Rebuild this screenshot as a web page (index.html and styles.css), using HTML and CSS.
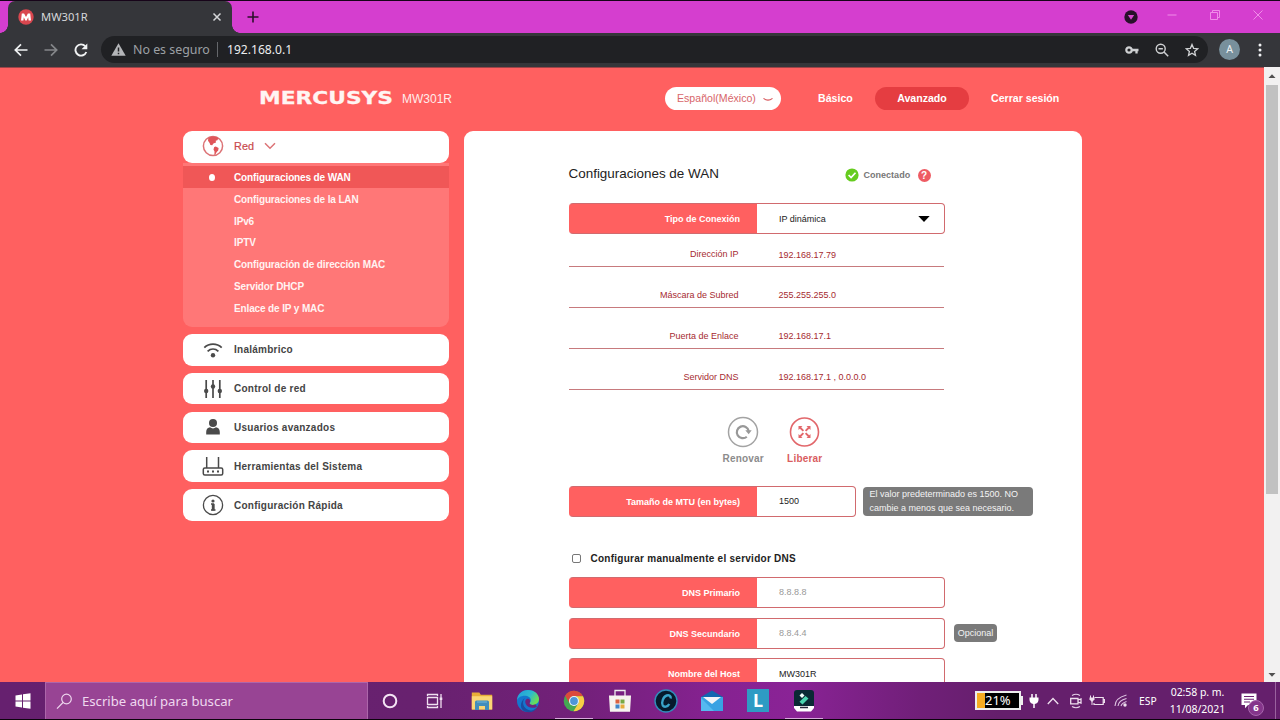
FILE: index.html
```html
<!DOCTYPE html>
<html lang="es">
<head>
<meta charset="utf-8">
<title>MW301R</title>
<link rel="stylesheet" href="styles.css">
</head>
<body>
<div class="screen">
  <header class="tabstrip">
    <div class="tab">
      <svg class="favicon" width="16" height="16" viewBox="0 0 16 16"><circle cx="8" cy="8" r="7.700" fill="#d9474f"/><path d="M3 11.500l.8-7h2.300L8 8l1.900-3.500h2.300l.8 7h-2.400L10.200 8.300 8.700 11.500H7.300L5.800 8.300l-.4 3.200z" fill="#fff"/></svg>
      <span class="tab-title">MW301R</span>
      <svg width="10" height="10" viewBox="0 0 10 10"><path d="M1.500 1.500l7 7M8.500 1.500l-7 7" stroke="#d5d7d9" stroke-width="1.500"/></svg>
    </div>
    <svg class="newtab" width="12" height="12" viewBox="0 0 12 12"><path d="M6 .5v11M.5 6h11" stroke="#2b0f2a" stroke-width="1.600"/></svg>
    <div class="winctl">
      <svg width="14" height="14" viewBox="0 0 14 14"><circle cx="7" cy="7" r="6.700" fill="#28102a"/><path d="M3.800 5h6.400L7 9.800z" fill="#d848cf"/></svg>
      <svg width="10" height="10" viewBox="0 0 10 10"><path d="M.5 5h9" stroke="#f08de8"/></svg>
      <svg width="10" height="10" viewBox="0 0 10 10"><path d="M.5 2.500h7v7h-7zM2.500 2.500v-2h7v7h-2" fill="none" stroke="#f08de8"/></svg>
      <svg width="10" height="10" viewBox="0 0 10 10"><path d="M.5.500l9 9M9.500.500l-9 9" stroke="#f08de8"/></svg>
    </div>
  </header>

  <div class="toolbar">
    <div class="nav">
      <svg width="14" height="14" viewBox="0 0 14 14"><path d="M13.500 7H1.500M7 1.300L1.300 7 7 12.700" fill="none" stroke="#f1f3f4" stroke-width="1.700"/></svg>
      <svg width="14" height="14" viewBox="0 0 14 14"><path d="M.5 7h12M7 1.300L12.700 7 7 12.700" fill="none" stroke="#85878a" stroke-width="1.700"/></svg>
      <svg width="14" height="14" viewBox="0 0 14 14"><path d="M12.300 9A5.600 5.600 0 1 1 11.200 3.200" fill="none" stroke="#f1f3f4" stroke-width="1.900"/><path d="M13.300.4v5.800H7.500z" fill="#f1f3f4"/></svg>
    </div>
    <div class="omnibox">
      <svg width="15" height="13" viewBox="0 0 15 13"><path d="M7.500.3L14.700 12.700H.3z" fill="#b4b6b9"/><path d="M7.500 4.500v4M7.500 9.700v1.600" stroke="#202124" stroke-width="1.500"/></svg>
      <span class="unsafe">No es seguro</span>
      <span class="divider"></span>
      <span class="url">192.168.0.1</span>
      <div class="omni-icons">
        <svg width="14" height="10" viewBox="0 0 14 10"><circle cx="4" cy="5" r="2.700" fill="none" stroke="#cfd1d3" stroke-width="2.200"/><path d="M7 5h6.500M11.500 5v3.500" stroke="#cfd1d3" stroke-width="2.300"/></svg>
        <svg width="14" height="14" viewBox="0 0 14 14"><circle cx="5.700" cy="5.700" r="4.500" fill="none" stroke="#cfd1d3" stroke-width="1.400"/><path d="M3.500 5.700h4.400M9 9l4.200 4.200" stroke="#cfd1d3" stroke-width="1.500"/></svg>
        <svg width="14" height="14" viewBox="0 0 14 14"><path d="M7 1.500l1.600 3.800 4.100.4-3.100 2.700.9 4L7 10.300l-3.500 2.100.9-4-3.100-2.700 4.100-.4z" fill="none" stroke="#cfd1d3" stroke-width="1.300"/></svg>
      </div>
    </div>
    <div class="avatar">A</div>
    <svg width="4" height="14" viewBox="0 0 4 14"><g fill="#f1f3f4"><circle cx="2" cy="2" r="1.500"/><circle cx="2" cy="7" r="1.500"/><circle cx="2" cy="12" r="1.500"/></g></svg>
  </div>

  <div class="viewport">
    <div class="page">
      <div class="brandbar">
        <svg class="logo" width="137" height="24" viewBox="0 0 137 24"><text x="0" y="18" textLength="134" lengthAdjust="spacingAndGlyphs">MERCUSYS</text></svg>
        <span class="model">MW301R</span>
        <div class="lang">Español(México)<svg width="10" height="5" viewBox="0 0 10 5"><path d="M.5 1.300Q5 5 9.500 1.300" fill="none" stroke="#d8565a" stroke-width="1.100"/></svg></div>
        <span class="basic">Básico</span>
        <span class="advanced">Avanzado</span>
        <span class="logout">Cerrar sesión</span>
      </div>
      <div class="columns">
        <nav class="side">
          <div class="item open">
            <svg width="22" height="22" viewBox="0 0 22 22"><circle cx="11" cy="11" r="9.600" fill="none" stroke="#dc7376" stroke-width="1.500"/><path d="M6.300 3.200L9 1.500l5 .2 2.400 1.500-1 2-1.700.6.300 1.600-2.600 1-1.200 1.800-1.800-.3-.8-1.900-1.600-2.200zM12.200 12l1.600-.6 2.800 1.700-.4 2.400-1.500 1.400-1.300 2.600-1 .5.100-3.600-1-1.800z" fill="#e0565a"/></svg>
            <span>Red</span>
            <svg class="chev" width="12" height="8" viewBox="0 0 12 8"><path d="M1 1.200l5 5 5-5" fill="none" stroke="#dc7376" stroke-width="1.500"/></svg>
          </div>
          <ul class="submenu">
            <li class="current">Configuraciones de WAN</li>
            <li>Configuraciones de la LAN</li>
            <li>IPv6</li>
            <li>IPTV</li>
            <li>Configuración de dirección MAC</li>
            <li>Servidor DHCP</li>
            <li>Enlace de IP y MAC</li>
          </ul>
          <div class="item"><svg width="22" height="22" viewBox="0 0 22 22"><g fill="none" stroke="#4a4a4a" stroke-width="1.800"><path d="M2.300 8.700C7.200 4 14.800 4 19.700 8.700"/><path d="M5.600 12.300c3.200-2.900 7.600-2.900 10.800 0"/></g><circle cx="11" cy="16.300" r="2.200" fill="#4a4a4a"/></svg><span>Inalámbrico</span></div>
          <div class="item"><svg width="22" height="22" viewBox="0 0 22 22"><path d="M4.200 2v18M11 2v18M17.800 2v18" stroke="#4a4a4a" stroke-width="1.700"/><g fill="#4a4a4a"><circle cx="4.200" cy="13" r="2.200"/><circle cx="11" cy="8.500" r="2.200"/><circle cx="17.800" cy="13" r="2.200"/></g></svg><span>Control de red</span></div>
          <div class="item"><svg width="22" height="22" viewBox="0 0 22 22"><g fill="#4a4a4a"><circle cx="11" cy="7" r="4"/><path d="M4.200 18.500v-2.500c0-3 1.800-4.500 3.800-4.700 1.600 1.500 4.400 1.500 6 0 2 .2 3.800 1.700 3.800 4.700v2.500z"/></g></svg><span>Usuarios avanzados</span></div>
          <div class="item"><svg width="22" height="22" viewBox="0 0 22 22"><g fill="none" stroke="#4a4a4a" stroke-width="1.500"><path d="M4.700 2v11M16.500 2v11"/><rect x="1.300" y="13" width="19.400" height="7" rx="1.500"/></g><path d="M5 16.500h2M10 16.500h2M15 16.500h2" stroke="#4a4a4a" stroke-width="2"/></svg><span>Herramientas del Sistema</span></div>
          <div class="item"><svg width="22" height="22" viewBox="0 0 22 22"><circle cx="11" cy="11" r="9.600" fill="none" stroke="#4a4a4a" stroke-width="1.300"/><circle cx="11" cy="7" r="1.600" fill="#4a4a4a"/><path d="M9 10h2.500v5.500M9 16h4.500" fill="none" stroke="#4a4a4a" stroke-width="1.300"/><path d="M11.200 10v6.500" stroke="#4a4a4a" stroke-width="2.800"/></svg><span>Configuración Rápida</span></div>
        </nav>
        <main class="panel">
          <div class="heading">
            <h1>Configuraciones de WAN</h1>
            <div class="status">
              <svg width="14" height="14" viewBox="0 0 14 14"><circle cx="7" cy="7" r="6.600" fill="#66cc1f"/><path d="M3.600 7l2.500 2.600 4.400-4.800" fill="none" stroke="#fff" stroke-width="1.700"/></svg>
              <span>Conectado</span>
              <i class="help">?</i>
            </div>
          </div>
          <div class="field first"><label>Tipo de Conexión</label><div class="value">IP dinámica<svg width="12" height="6" viewBox="0 0 12 6"><path d="M.3 0h11.400L6 6z" fill="#000"/></svg></div></div>
          <dl class="info">
            <div><dt>Dirección IP</dt><dd>192.168.17.79</dd></div>
            <div><dt>Máscara de Subred</dt><dd>255.255.255.0</dd></div>
            <div><dt>Puerta de Enlace</dt><dd>192.168.17.1</dd></div>
            <div><dt>Servidor DNS</dt><dd>192.168.17.1 , 0.0.0.0</dd></div>
          </dl>
          <div class="actions">
            <div class="action renew"><svg width="32" height="32" viewBox="0 0 32 32"><circle cx="16" cy="16" r="14.500" fill="none" stroke="#a3a3a3" stroke-width="1.500"/><path d="M19.800 20.700A6 6 0 1 1 21.700 15" fill="none" stroke="#989898" stroke-width="2.200"/><path d="M18.300 14.300h6.400l-3 4z" fill="#989898"/></svg><span>Renovar</span></div>
            <div class="action release"><svg width="32" height="32" viewBox="0 0 32 32"><circle cx="15.500" cy="16" r="14" fill="none" stroke="#e2676b" stroke-width="1.600"/><g transform="translate(-.5 0)"><path d="M11.500 11.500l3.400 3.400M20.500 11.500l-3.400 3.400M11.500 20.500l3.400-3.400M20.500 20.500l-3.400-3.400" stroke="#e2676b" stroke-width="1.900"/><path d="M10 10h4l-4 4zM22 10h-4l4 4zM10 22h4l-4-4zM22 22h-4l4-4z" fill="#e2676b"/></g></svg><span>Liberar</span></div>
          </div>
          <div class="line mtu"><div class="field short"><label>Tamaño de MTU (en bytes)</label><div class="value">1500</div></div><div class="tip">El valor predeterminado es 1500. NO<br>cambie a menos que sea necesario.</div></div>
          <div class="check"><span class="box"></span><span>Configurar manualmente el servidor DNS</span></div>
          <div class="line"><div class="field"><label>DNS Primario</label><div class="value ghost">8.8.8.8</div></div></div>
          <div class="line"><div class="field"><label>DNS Secundario</label><div class="value ghost">8.8.4.4</div></div><div class="tag">Opcional</div></div>
          <div class="line"><div class="field"><label>Nombre del Host</label><div class="value">MW301R</div></div></div>
        </main>
      </div>
    </div>
    <div class="scrollbar">
      <svg width="8" height="4" viewBox="0 0 8 4"><path d="M.5 4L4 .3 7.500 4z" fill="#505050"/></svg>
      <div class="thumb"></div>
      <svg class="down" width="8" height="4" viewBox="0 0 8 4"><path d="M.5 0L4 3.700 7.500 0z" fill="#505050"/></svg>
    </div>
  </div>

  <footer class="taskbar">
    <div class="start"><svg width="16" height="16" viewBox="0 0 16 16"><path d="M.5 2.400L7 1.500v6H.5zM8 1.300L15.500.3v7.200H8zM.5 8.500H7v6l-6.500-.9zM8 8.500h7.500v7.200L8 14.700z" fill="#fff"/></svg></div>
    <div class="search"><svg width="17" height="17" viewBox="0 0 17 17"><circle cx="10.500" cy="6" r="4.800" fill="none" stroke="#eed6ee" stroke-width="1.200"/><path d="M7 9.500L1 15.700" stroke="#eed6ee" stroke-width="1.200"/></svg><span>Escribe aquí para buscar</span></div>
    <div class="apps">
      <div class="app"><svg width="16" height="16" viewBox="0 0 16 16"><circle cx="8" cy="8" r="6.300" fill="none" stroke="#f4e4f4" stroke-width="2"/></svg></div>
      <div class="app"><svg width="18" height="16" viewBox="0 0 18 16"><path d="M1.500 3V1.500h10V3M1.500 13v1.500h10V13M1.500 4.500h10v7h-10zM15 1v14" fill="none" stroke="#f0dff0" stroke-width="1.300"/><path d="M13.700 4.500h2.600v2.500h-2.600z" fill="#f0dff0"/></svg></div>
      <div class="app"><svg width="22" height="20" viewBox="0 0 22 20"><path d="M.8 1.500h7.500l1.500 2.200h11.400v14.800H.8z" fill="#e8ad38"/><path d="M.8 5.200h20.400v13.300H.8z" fill="#fbd675"/><path d="M4 19v-8q0-1.500 1.500-1.500h11q1.500 0 1.500 1.500v8h-4v-4H8v4z" fill="#438dbb"/><path d="M6 11h10" stroke="#72b8d9"/></svg></div>
      <div class="app"><svg width="24" height="24" viewBox="0 0 24 24"><defs><linearGradient id="edge" x1="0" y1="0" x2="1" y2=".5"><stop stop-color="#249bdc"/><stop offset=".6" stop-color="#2cb9cf"/><stop offset="1" stop-color="#6bdd57"/></linearGradient></defs><circle cx="12" cy="12" r="11" fill="#1476ce"/><path d="M1 12C1 5 6 1 12 1c7 0 11 4.500 11 9 0 4-3.500 6-7 6-1.800 0-3-.7-2.500-1.700.7-1 1.300-1.600 1.300-3 0-2.800-2.800-4.500-6-4.500C4.500 6.800 1.500 9 1 12z" fill="url(#edge)"/><path d="M9 9c-3 3-2.500 8 1.500 11 3 2 7 2 10-1-2 4-7 5-11 3.800-6-2-6-10-.5-13.800z" fill="#194da1"/><path d="M13.500 14.300c.8-1.200.9-3.500-.5-4.300-3-1-4.500 2-3.300 4.700 1.500 3.500 6.500 5.600 11.300 3l-1.500-2.500c-2 1-5 1.200-6-.9z" fill="#6d237d"/></svg></div>
      <div class="app active"><svg width="22" height="22" viewBox="0 0 22 22"><circle cx="11" cy="11" r="10.300" fill="#45a852"/><path d="M2.100 5.800A10.300 10.300 0 0 1 20 6.200H11a5 5 0 0 0-4.500 7z" fill="#db493b"/><path d="M20 6.200A10.300 10.300 0 0 1 10.500 21.300L15.200 13.500A5 5 0 0 0 11 6.200z" fill="#f8cd45"/><circle cx="11" cy="11" r="5" fill="#eef6fb"/><circle cx="11" cy="11" r="3.900" fill="#4c96d6"/></svg></div>
      <div class="app"><svg width="24" height="24" viewBox="0 0 24 24"><path d="M7 8V1.500h10V8" fill="none" stroke="#eee" stroke-width="1.300"/><path d="M1 6.500h22L22 22.800H2z" fill="#f7f4ef"/><path d="M7.500 10.500h4v4h-4z" fill="#db6340"/><path d="M12.500 10.500h4v4h-4z" fill="#78a943"/><path d="M7.500 15.500h4v4h-4z" fill="#4186c9"/><path d="M12.500 15.500h4v4h-4z" fill="#e6ac3c"/></svg></div>
      <div class="app"><svg width="24" height="24" viewBox="0 0 24 24"><circle cx="12" cy="12" r="11" fill="#061a2c" stroke="#318dbb" stroke-width="1.400"/><path d="M16.700 9.500c.3-2.500-1.500-3.800-4-3-3.600 1.200-5.500 7-4 9.800 1.300 2.300 5 1.600 6.600-1.300" fill="none" stroke="#39a4c9" stroke-width="2.400"/></svg></div>
      <div class="app"><svg width="24" height="22" viewBox="0 0 24 22"><path d="M1 7L12 .5 23 7v3H1z" fill="#1267b0"/><path d="M1 7h22v14H1z" fill="#39a2e3"/><path d="M1 8l13 13H1z" fill="#55baf0"/><path d="M3 7h18l-9 7z" fill="#f3f5f8"/></svg></div>
      <div class="app"><div class="l-app">L</div></div>
      <div class="app active"><svg width="22" height="24" viewBox="0 0 22 24"><rect x="1" y="1" width="20" height="18" rx="3" fill="#0a2934"/><path d="M6.500 6.500l2.500-2.500 2.500 2.500L9 9z" fill="#f0fffb"/><path d="M12.500 7l3 2.500-6 6-3-2.700z" fill="#4bd5b0"/><path d="M1 17h20v2l-3 3.500H4L1 19z" fill="#fff"/><path d="M7 18.500h8" stroke="#29283c" stroke-width="1.500"/></svg></div>
    </div>
    <div class="tray">
      <div class="battery"><span>21%</span></div>
      <svg class="plug" width="10" height="16" viewBox="0 0 10 16"><path d="M3 1v4M7 1v4M5 10v5" stroke="#fff" stroke-width="1.500"/><path d="M.5 4.500h9V7Q9 11 5 11T.5 7z" fill="#fff"/></svg>
      <svg width="12" height="8" viewBox="0 0 12 8"><path d="M.8 7L6 1.500 11.200 7" fill="none" stroke="#eedfee" stroke-width="1.300"/></svg>
      <svg width="12" height="16" viewBox="0 0 12 16"><path d="M2 2.500q4-2.500 8 0M2 13.500q4 2.500 8 0" fill="none" stroke="#e6d2e9" stroke-width="1.100"/><path d="M.7 5.500H8v5.300H.7zM8 7l3-1v4L8 9z" fill="none" stroke="#eedfee" stroke-width="1.300"/></svg>
      <svg width="16" height="11" viewBox="0 0 16 11"><path d="M5.500 2.500h8.700v7H5V8M14.200 4.500h1.300v3h-1.300" fill="none" stroke="#eedfee" stroke-width="1.200"/><path d="M1.500.5v3M4.500.5v3M3 6v4" stroke="#eedfee"/><path d="M.5 2.500h5v2L3 7 .5 4.500z" fill="#eedfee"/></svg>
      <svg width="14" height="13" viewBox="0 0 14 13"><g fill="none" stroke="#ddc2e1" stroke-width="1.100"><path d="M1 12Q1 4 12.500 1"/><path d="M4 12Q4.500 6.500 12.500 4.500"/><path d="M7 12Q8 9 12.500 7.500"/></g><circle cx="11" cy="11" r="1.700" fill="#eedfee"/></svg>
      <span class="ime">ESP</span>
      <div class="clock"><span>02:58 p. m.</span><span>11/08/2021</span></div>
      <div class="notify"><svg width="16" height="16" viewBox="0 0 16 16"><path d="M.5.500h15v11.500H7L4 15.200V12H.5z" fill="#fff"/><path d="M3 3.500h10M3 6.200h10M3 9h6" stroke="#6b2071" stroke-width="1.100"/></svg><b>6</b></div>
      <i class="peek"></i>
    </div>
  </footer>
</div>
</body>
</html>
```
FILE: styles.css
```css
* { box-sizing: border-box; }
body { margin: 0; background: #000; }
svg { display: block; flex: none; }
.screen { width: 1280px; height: 720px; overflow: hidden; display: flex; flex-direction: column; font-family: "Liberation Sans", Arial, sans-serif; white-space: nowrap; border-top: 1px solid #170419; border-bottom: 1px solid #0b030c; }

.tabstrip { height: 32px; background: #d53ecf; display: flex; align-items: center; padding-left: 8px; font-family: "Noto Sans", sans-serif; flex: none; }
.tab { width: 224px; height: 32px; background: #35363a; border-radius: 7px 7px 0 0; display: flex; align-items: center; padding: 0 10px; position: relative; }
.tab::before, .tab::after { content: ""; position: absolute; bottom: 0; width: 8px; height: 8px; }
.tab::before { left: -8px; background: radial-gradient(circle at 0 0, transparent 7.5px, #35363a 8px); }
.tab::after { right: -8px; background: radial-gradient(circle at 100% 0, transparent 7.5px, #35363a 8px); }
.tab-title { font-size: 11.200px; color: #d5d7d9; margin-left: 7px; flex: 1; padding-bottom: 2px; }
.newtab { margin-left: 15px; }
.winctl { margin-left: auto; display: flex; align-items: center; padding-right: 17px; }
.winctl svg:nth-child(1) { margin-right: 29px; }
.winctl svg:nth-child(2) { margin-right: 33px; }
.winctl svg:nth-child(3) { margin-right: 33px; }
.winctl svg:not(:first-child) { margin-top: -5px; }

.toolbar { height: 34px; background: #35363a; display: flex; align-items: center; padding: 0 18px 1px 14px; font-family: "Noto Sans", sans-serif; flex: none; }
.nav { display: flex; gap: 16px; width: 87px; }
.omnibox { width: 1107px; height: 27px; background: #202124; border-radius: 14px; display: flex; align-items: center; padding: 0 9px 0 10px; }
.unsafe { font-size: 12.400px; color: #9da0a4; margin-left: 7px; width: 84px; }
.divider { width: 1px; height: 15px; background: #65676b; margin-right: 9px; }
.url { font-size: 12.100px; color: #eceeef; }
.omni-icons { display: flex; align-items: center; gap: 16px; margin-left: auto; }
.avatar { width: 21px; height: 21px; border-radius: 50%; background: #78909c; color: #eef2f4; font-size: 10.500px; line-height: 21px; text-align: center; margin: 0 auto 0 11px; }

.viewport { flex: 1; display: flex; min-height: 0; }
.page { width: 1264px; background: #ff6060; overflow: hidden; border-top: 1px solid #9d4448; }
.brandbar { height: 63px; display: flex; align-items: center; padding: 0 0 3px 259px; color: #fff; }
.logo text { font-family: "DejaVu Sans", sans-serif; font-weight: bold; font-size: 18.500px; fill: #fff5f3; stroke: #fff5f3; stroke-width: .3px; }
.model { font-size: 12px; color: #ffeceb; width: 257px; padding: 1px 0 0 6px; }
.lang { margin-left: 12px; width: 116px; height: 23px; border-radius: 12px; background: #fff; color: #d8656a; font-size: 10.600px; display: flex; align-items: center; padding: 0 0 1px 12px; }
.lang svg { margin: 4px 0 0 7px; }
.basic, .advanced, .logout { font-size: 10.600px; font-weight: bold; padding-bottom: 1px; }
.basic { width: 57px; margin-left: 37px; }
.advanced { width: 94px; height: 23px; line-height: 22px; border-radius: 12px; background: #e53d41; text-align: center; }
.logout { margin-left: 22px; }
.columns { display: flex; gap: 15px; padding-left: 183px; align-items: flex-start; }

.side { width: 266px; }
.item { height: 31.500px; margin-bottom: 7.300px; background: #fff; border-radius: 9px; display: flex; align-items: center; padding-left: 18.500px; font-size: 10px; font-weight: bold; letter-spacing: .25px; color: #444; }
.item span { margin-left: 10.500px; }
.item.open { margin-bottom: 0; color: #c9494d; font-weight: normal; font-size: 10.800px; height: 32px; letter-spacing: .1px; padding-bottom: 2px; -webkit-text-stroke: .2px #c9494d; }
.chev { margin-left: 10px; }
.submenu { list-style: none; margin: 0 0 7.500px; padding: 3px 0 8px; background: #ff7777; border-radius: 0 0 9px 9px; font-size: 10px; font-weight: bold; letter-spacing: -.13px; color: #fff3f2; }
.submenu li { height: 21.800px; line-height: 23px; padding-left: 51px; position: relative; }
.submenu .current { background: #f05757; color: #fff; }
.current::before { content: ""; position: absolute; left: 26px; top: 8px; width: 6px; height: 7px; border-radius: 50%; background: #fff; }

.panel { width: 618px; height: 600px; background: #fff; border-radius: 9px 9px 0 0; padding: 32px 0 0 104.500px; }
.heading { height: 40px; display: flex; }
h1 { margin: 0; font-size: 13.450px; font-weight: normal; line-height: 21px; width: 276px; color: #222; }
.status { display: flex; align-items: center; height: 24px; font-size: 9px; font-weight: bold; color: #777; letter-spacing: .02px; }
.status span { margin: 0 7.500px 0 5px; }
.help { width: 13px; height: 13px; border-radius: 50%; background: #ee5b63; color: #fff; font: bold 10px/13px "Liberation Sans", sans-serif; text-align: center; }
.field { width: 376.500px; height: 31px; border: 1px solid #d16a6e; border-left-color: #ff6060; border-radius: 4px; display: flex; overflow: hidden; font-size: 9px; flex: none; background: linear-gradient(90deg, #ff6060 187px, #fff 187px); }
.field label { width: 187.500px; color: #fff; font-weight: bold; text-align: right; padding-right: 17px; line-height: 30px; }
.value { flex: 1; padding: 0 14px 0 22px; line-height: 30px; display: flex; align-items: center; justify-content: space-between; color: #222; }
.ghost { color: #999; }
.short { width: 287px; }
.info { margin: 0; width: 375px; font-size: 9px; color: #a62a30; }
.info div { height: 40.900px; display: flex; align-items: flex-end; border-bottom: 1px solid #c77a7d; }
.info div:first-child { height: 33px; }
.info dt { width: 170px; text-align: right; line-height: 23px; }
.info dd { margin: 0 0 0 40px; line-height: 22.500px; }
.actions { display: flex; margin-left: 144px; height: 96.300px; padding-top: 26.100px; }
.action { width: 61.500px; display: flex; flex-direction: column; align-items: center; font-size: 10px; font-weight: bold; letter-spacing: .2px; color: #8c8c8c; }
.action span { margin-top: 5px; }
.release { color: #d95d5f; }
.renew { width: 61.500px; }
.line { display: flex; align-items: center; height: 40.800px; }
.mtu { height: 31px; }
.tip { margin-left: 7px; width: 170px; height: 29px; border-radius: 4px; background: #7a7a7a; color: #f4f4f4; font-size: 9px; line-height: 14px; padding-left: 7px; }
.tag { margin-left: 9px; width: 43px; height: 18px; line-height: 18px; border-radius: 4px; background: #7a7a7a; color: #f4f4f4; font-size: 9px; text-align: center; }
.check { display: flex; align-items: center; height: 55px; padding: 28px 0 0 3px; font-size: 10px; font-weight: bold; letter-spacing: .26px; color: #222; }
.box { width: 9px; height: 9px; border: 1px solid #777; border-radius: 2px; margin-right: 10px; }

.scrollbar { width: 16px; background: #f2f1f1; display: flex; flex-direction: column; align-items: center; padding: 7px 0 5px; }
.thumb { width: 12px; height: 409px; margin-top: 7px; background: #c1c1c1; }
.down { margin-top: auto; }

.taskbar { height: 37px; flex: none; display: flex; background: linear-gradient(90deg, #66206f 0%, #68216f 33%, #722079 45%, #862291 56%, #8a2396 62%, #701f78 72%, #651f6c 78%, #651f6c 100%); font-family: "Noto Sans", sans-serif; color: #fff; }
.start { width: 45px; display: flex; align-items: center; justify-content: center; }
.search { width: 323px; background: #984494; border: 1px solid #ad66aa; border-width: 1px 1px 0; display: flex; align-items: center; padding-left: 10px; font-size: 13.150px; color: #efd8ef; }
.search span { margin-left: 9px; }
.apps { display: flex; }
.app { width: 46px; display: flex; align-items: center; justify-content: center; }
.app:nth-child(1) { width: 44px; }
.app:nth-child(3) { margin-left: 1px; }
.active { box-shadow: inset 0 -1px #d9a9dd; width: 38px; margin: 0 4px; }
.l-app { width: 22px; height: 23px; background: #2e9bc4; color: #fff; font-size: 18px; line-height: 23px; font-weight: bold; text-align: center; }
.tray { margin-left: auto; display: flex; align-items: center; }
.battery { width: 46px; height: 19px; border: 2px solid #eee; background: linear-gradient(90deg, #f6ac22 8px, #000 8px); font-size: 13px; line-height: 15px; padding-left: 8px; position: relative; margin-right: 8px; }
.battery::after { content: ""; position: absolute; right: -4px; top: 3px; width: 2px; height: 9px; background: #eee; }
.plug { margin-right: 8px; }
.tray > svg:nth-child(3) { margin-right: 11px; }
.tray > svg:nth-child(4) { margin-right: 7px; }
.tray > svg:nth-child(5) { margin-right: 9px; }
.tray > svg:nth-child(6) { margin-right: 11px; }
.ime { font-size: 10.300px; width: 31px; }
.clock { display: flex; flex-direction: column; align-items: center; width: 55px; font-size: 10.500px; line-height: 16.500px; letter-spacing: -.05px; }
.notify { position: relative; margin-left: 16px; width: 34px; }
.notify b { position: absolute; left: 7px; top: 7px; width: 16px; height: 16px; border-radius: 50%; background: #85358b; border: 1px solid #a866ad; font-size: 9.500px; line-height: 14px; text-align: center; }
.peek { width: 1px; height: 37px; background: #9a629e; margin-right: 4px; }
```
